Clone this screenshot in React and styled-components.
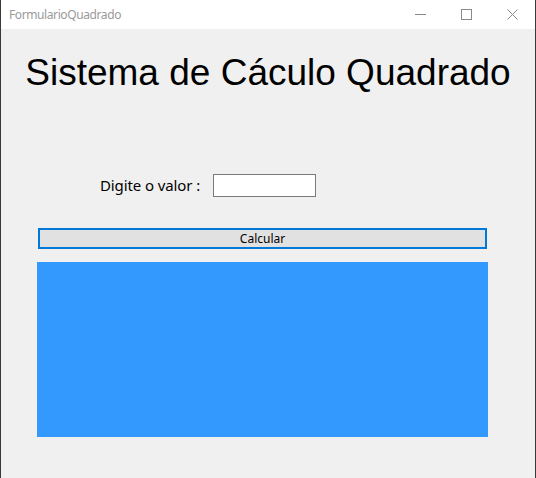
import React from 'react';
import styled, { createGlobalStyle } from 'styled-components';

const Global = createGlobalStyle`
  html, body {
    margin: 0;
    padding: 0;
    background: #f0f0f0;
  }
  * {
    box-sizing: border-box;
  }
`;

const Window = styled.div`
  width: 536px;
  height: 478px;
  display: flex;
  flex-direction: column;
  background: #f0f0f0;
  border-left: 1px solid #3a3a3a;
  border-right: 1px solid #3a3a3a;
  overflow: hidden;
`;

const TitleBar = styled.div`
  height: 29px;
  flex: none;
  display: flex;
  align-items: center;
  background: #ffffff;
`;

const WindowTitle = styled.span`
  flex: 1;
  padding-left: 8px;
  font-family: 'Noto Sans', 'Open Sans', sans-serif;
  font-size: 12px;
  letter-spacing: -0.4px;
  color: #9a9a9a;
`;

const Control = styled.div`
  width: 46px;
  height: 29px;
  display: flex;
  align-items: center;
  justify-content: center;
`;

const Content = styled.div`
  flex: 1;
  display: flex;
  flex-direction: column;
`;

const Heading = styled.h1`
  margin: 23px 0 0;
  font-family: 'Liberation Sans', Arial, sans-serif;
  font-weight: normal;
  font-size: 37px;
  line-height: 42px;
  text-align: center;
  color: #000;
`;

const InputRow = styled.div`
  margin-top: 80px;
  padding-left: 99px;
  display: flex;
  align-items: center;
  height: 23px;
`;

const Label = styled.label`
  width: 113px;
  padding-bottom: 2px;
  font-family: 'Noto Sans', 'Open Sans', sans-serif;
  font-size: 15px;
  letter-spacing: -0.1px;
  color: #000;
`;

const TextBox = styled.input`
  width: 103px;
  height: 23px;
  border: 1px solid #7a7a7a;
  background: #fff;
  padding: 0 3px;
  outline: none;
`;

const Button = styled.button`
  margin: 31px 0 0 37px;
  width: 449px;
  height: 21px;
  border: 2px solid #0078d7;
  background: #e1e1e1;
  font-family: 'Noto Sans', 'Open Sans', sans-serif;
  font-size: 12px;
  color: #000;
  padding: 0;
  line-height: 17px;
`;

const Panel = styled.div`
  margin: 13px 0 0 36px;
  width: 451px;
  height: 175px;
  background: #3399ff;
`;

const stroke = { stroke: '#8a8a8a', strokeWidth: 1, fill: 'none' };

export default function App() {
  return (
    <>
      <Global />
      <Window>
        <TitleBar>
          <WindowTitle>FormularioQuadrado</WindowTitle>
          <Control>
            <svg width="11" height="11" viewBox="0 0 11 11">
              <line x1="0" y1="5.5" x2="11" y2="5.5" {...stroke} />
            </svg>
          </Control>
          <Control>
            <svg width="11" height="11" viewBox="0 0 11 11">
              <rect x="0.5" y="0.5" width="10" height="10" {...stroke} />
            </svg>
          </Control>
          <Control>
            <svg width="11" height="11" viewBox="0 0 11 11">
              <path d="M0.5 0.5 L10.5 10.5 M10.5 0.5 L0.5 10.5" {...stroke} />
            </svg>
          </Control>
        </TitleBar>
        <Content>
          <Heading>Sistema de Cáculo Quadrado</Heading>
          <InputRow>
            <Label htmlFor="valor">Digite o valor :</Label>
            <TextBox id="valor" type="text" />
          </InputRow>
          <Button type="button">Calcular</Button>
          <Panel />
        </Content>
      </Window>
    </>
  );
}
